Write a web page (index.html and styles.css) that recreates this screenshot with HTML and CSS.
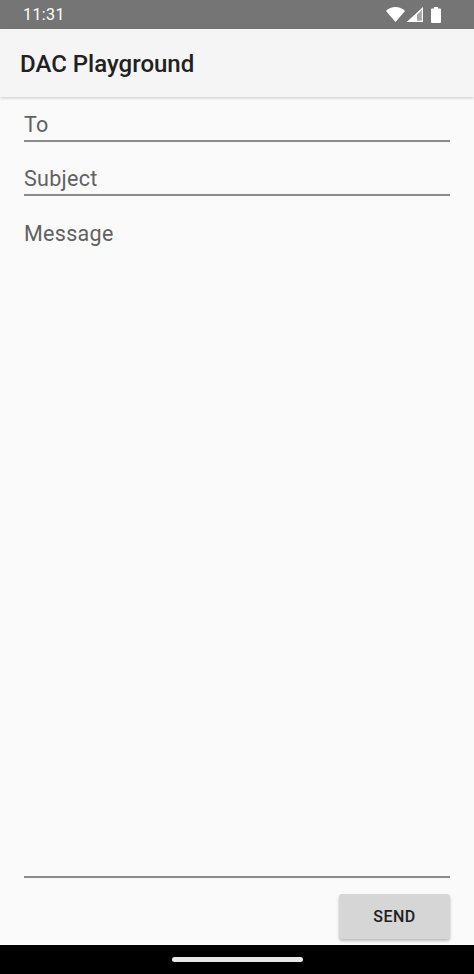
FILE: index.html
```html
<!DOCTYPE html>
<html lang="en">
<head>
  <meta charset="UTF-8" />
  <meta name="viewport" content="width=device-width, initial-scale=1.0"/>
  <title>DAC Playground</title>
  <link rel="stylesheet" href="styles.css">
</head>
<body>
<div class="status-bar">
  <span class="clock">11:31</span>
  <div class="status-icons">
    <svg class="icon-wifi" width="19" height="15" viewBox="0 0 19 15"><path d="M0 4C2.500 1.500 5.800 0 9.500 0s7 1.500 9.500 4L9.500 15z" fill="#fff"/></svg>
    <svg class="icon-signal" width="16" height="15" viewBox="0 0 16 15"><path d="M16 0V15H0z" fill="#fff" fill-opacity="0.35"/><path d="M16 0V15H0zM14.800 3V13.800H4z" fill="#fff" fill-rule="evenodd"/><path d="M10 6V15H0z" fill="#fff"/></svg>
    <svg class="icon-battery" width="10" height="16" viewBox="0 0 10 16"><path d="M3 0h4v1.500h2a1 1 0 0 1 1 1V15a1 1 0 0 1-1 1H1a1 1 0 0 1-1-1V2.500a1 1 0 0 1 1-1h2z" fill="#fff"/></svg>
  </div>
</div>

<header class="app-bar">DAC Playground</header>

<main class="form">
  <div class="field field-to">To</div>
  <div class="field field-subject">Subject</div>
  <div class="field field-message">Message</div>
  <div class="actions">
    <button class="send">SEND</button>
  </div>
</main>

<div class="nav-bar"><div class="home-pill"></div></div>
</body>
</html>
```

FILE: styles.css
```css
* {
  box-sizing: border-box;
}

html, body {
  height: 100%;
}

body {
  margin: 0;
  font-family: Roboto, sans-serif;
  background: #fafafa;
  display: flex;
  flex-direction: column;
  height: 974px;
  overflow: hidden;
}

.status-bar {
  height: 29px;
  flex-shrink: 0;
  background: #757575;
  color: #fff;
  display: flex;
  align-items: center;
  justify-content: space-between;
  padding: 0 33px 0 23px;
}

.clock {
  font-size: 16px;
  letter-spacing: 0.4px;
}

.status-icons {
  display: flex;
  align-items: center;
  gap: 2px;
}

.icon-battery {
  margin-left: 6px;
}

.app-bar {
  height: 68px;
  flex-shrink: 0;
  background: #f5f5f5;
  color: #212121;
  font-size: 24px;
  font-weight: 500;
  line-height: 70px;
  padding-left: 20px;
  box-shadow: 0 1px 3px rgba(0,0,0,0.2);
  position: relative;
}

.form {
  flex: 1;
  display: flex;
  flex-direction: column;
  padding: 0 24px;
}

.field {
  color: #616161;
  font-size: 21.500px;
  border-bottom: 2px solid #8a8a8a;
  letter-spacing: 0.300px;
}

.field-to {
  height: 45px;
  padding-top: 15px;
}

.field-subject {
  height: 54px;
  padding-top: 24px;
}

.field-message {
  flex: 1;
  padding-top: 25px;
}

.actions {
  height: 67px;
  flex-shrink: 0;
  display: flex;
  justify-content: flex-end;
  padding-top: 16px;
}

.send {
  width: 111px;
  height: 45px;
  border: none;
  border-radius: 3px;
  background: #d6d6d6;
  color: #212121;
  font-family: Roboto, sans-serif;
  font-size: 16px;
  font-weight: 500;
  letter-spacing: 0.500px;
  box-shadow: 0 2px 3px rgba(0,0,0,0.25);
}

.nav-bar {
  height: 29px;
  flex-shrink: 0;
  background: #000;
  display: flex;
  align-items: center;
  justify-content: center;
}

.home-pill {
  width: 131px;
  height: 5px;
  border-radius: 3px;
  background: #e8e8e8;
}
```
